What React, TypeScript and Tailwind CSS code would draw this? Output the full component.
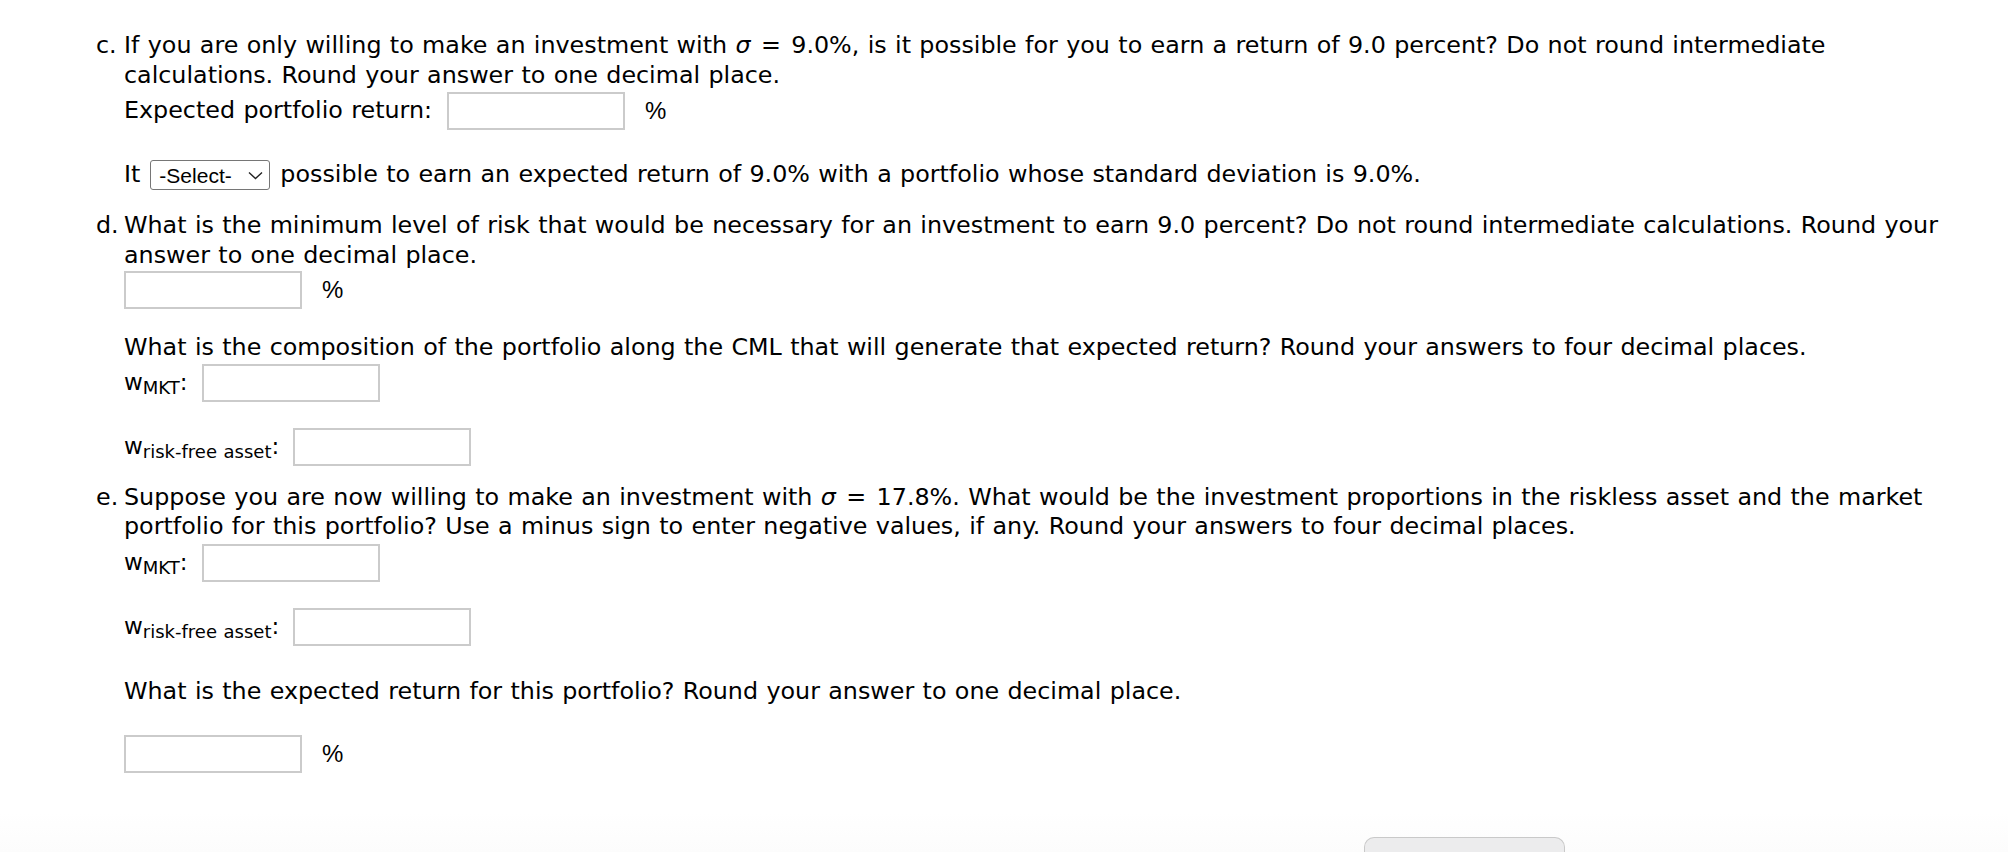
import type React from 'react'

const Box: React.FC<{ className?: string }> = ({ className = '' }) => (
  <input
    type="text"
    aria-label="answer"
    className={`w-[178px] h-[38px] border-2 border-[#cbcbcb] bg-white outline-none ${className}`}
  />
)

const Pct: React.FC = () => (
  <span className="font-['Liberation_Sans',Arial,sans-serif] text-[24px] ml-[20px]">%</span>
)

const SelectBox: React.FC = () => (
  <div
    role="combobox"
    className="inline-flex items-center justify-between w-[120px] h-[30px] border border-[#767676] rounded-[3px] pl-[8px] pr-[6px] font-['Liberation_Sans',Arial,sans-serif] text-[21px] leading-none bg-white [word-spacing:normal]"
  >
    <span>-Select-</span>
    <svg width="15" height="9" viewBox="0 0 15 9" fill="none" stroke="#222" strokeWidth="1.4">
      <polyline points="1,1.5 7.5,7.5 14,1.5" />
    </svg>
  </div>
)

const Label: React.FC<{ sub: string }> = ({ sub }) => (
  <span className="mr-[14px] whitespace-nowrap text-[23px]">
    w<sub className="text-[18px]">{sub}</sub>:
  </span>
)

const Sigma: React.FC<{ value: string }> = ({ value }) => (
  <>
    <i>σ</i> <span className="mx-[2px]">=</span> {value}
  </>
)

const Item: React.FC<{ letter: string; children: React.ReactNode }> = ({ letter, children }) => (
  <div className="flex">
    <span className="w-[28px] shrink-0">{letter}</span>
    <div className="flex-1">{children}</div>
  </div>
)

export default function App() {
  return (
    <div className="min-h-[852px] flex flex-col bg-white text-black font-['DejaVu_Sans',Verdana,sans-serif] text-[23.8px] [word-spacing:0.8px] leading-[29.5px]">
      <div className="pl-[96px] pr-[43px] pt-[31px]">
        <Item letter="c.">
          <p>
            If you are only willing to make an investment with <Sigma value="9.0%" />, is it possible for you to
            earn a return of 9.0 percent? Do not round intermediate calculations. Round your answer to one decimal
            place.
          </p>
          <div className="flex items-center mt-[2px]">
            <span className="mr-[15px]">Expected portfolio return:</span>
            <Box />
            <Pct />
          </div>
          <div className="flex items-center gap-[10px] mt-[30px]">
            <span>It</span>
            <SelectBox />
            <span>possible to earn an expected return of 9.0% with a portfolio whose standard deviation is 9.0%.</span>
          </div>
        </Item>

        <div className="mt-[21px]">
          <Item letter="d.">
            <p>
              What is the minimum level of risk that would be necessary for an investment to earn 9.0 percent? Do not
              round intermediate calculations. Round your answer to one decimal place.
            </p>
            <div className="flex items-center mt-[1px]">
              <Box />
              <Pct />
            </div>
            <p className="mt-[24px]">
              What is the composition of the portfolio along the CML that will generate that expected return? Round
              your answers to four decimal places.
            </p>
            <div className="flex items-center mt-[1px]">
              <Label sub="MKT" />
              <Box />
            </div>
            <div className="flex items-center mt-[26px]">
              <Label sub="risk-free asset" />
              <Box />
            </div>
          </Item>
        </div>

        <div className="mt-[17px]">
          <Item letter="e.">
            <p>
              Suppose you are now willing to make an investment with <Sigma value="17.8%" />. What would be the
              investment proportions in the riskless asset and the market portfolio for this portfolio? Use a minus
              sign to enter negative values, if any. Round your answers to four decimal places.
            </p>
            <div className="flex items-center mt-[2px]">
              <Label sub="MKT" />
              <Box />
            </div>
            <div className="flex items-center mt-[26px]">
              <Label sub="risk-free asset" />
              <Box />
            </div>
            <p className="mt-[31px]">What is the expected return for this portfolio? Round your answer to one decimal place.</p>
            <div className="flex items-center mt-[29px]">
              <Box />
              <Pct />
            </div>
          </Item>
        </div>
      </div>

      <div className="mt-auto h-[40px] bg-gradient-to-b from-white to-[#fcfcfc] flex items-end">
        <div className="ml-[1364px] w-[201px] h-[15px] rounded-t-[10px] border border-b-0 border-[#c9c9c9] bg-[#ececed]" />
      </div>
    </div>
  )
}
